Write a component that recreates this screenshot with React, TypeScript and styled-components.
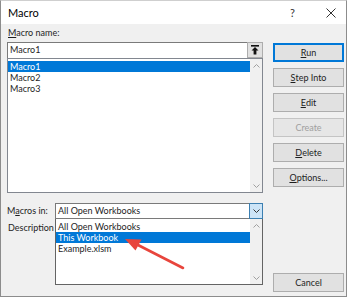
import React from 'react';
import styled, { createGlobalStyle } from 'styled-components';

const GlobalStyle = createGlobalStyle`
  html, body {
    margin: 0;
    padding: 0;
    background: #ffffff;
  }
  body {
    font-family: Lato, "Noto Sans", "Liberation Sans", sans-serif;
    font-size: 9px;
    color: #1e1e1e;
  }
  * {
    box-sizing: border-box;
  }
`;

const colors = {
  face: '#f0f0f0',
  button: '#e1e1e1',
  buttonBorder: '#adadad',
  select: '#0078d7',
  field: '#7a7a7a',
  text: '#1e1e1e',
  disabled: '#a0a0a0',
  arrow: '#e8453c',
};

const macros = ['Macro1', 'Macro2', 'Macro3'];
const locations = ['All Open Workbooks', 'This Workbook', 'Example.xlsm'];

const buttons = [
  { key: 'R', rest: 'un', primary: true },
  { key: 'S', rest: 'tep Into' },
  { key: 'E', rest: 'dit' },
  { key: '', rest: 'Create', disabled: true },
  { key: 'D', rest: 'elete' },
  { key: 'O', rest: 'ptions...' },
];

function CloseIcon() {
  return (
    <svg width="10" height="10" viewBox="0 0 10 10">
      <path d="M0.5 0.5 L9.5 9.5 M9.5 0.5 L0.5 9.5" stroke="#333" strokeWidth="1" fill="none" />
    </svg>
  );
}

function PickIcon() {
  return (
    <svg width="8" height="10" viewBox="0 0 8 10">
      <rect x="0" y="0" width="8" height="1.6" fill="#111" />
      <path d="M4 2 L7.5 5.6 L5.4 5.6 L5.4 9.5 L2.6 9.5 L2.6 5.6 L0.5 5.6 Z" fill="#111" />
    </svg>
  );
}

function Chevron({ up, color = '#a0a0a0' }: { up?: boolean; color?: string }) {
  return (
    <svg width="7" height="4" viewBox="0 0 7 4">
      <path
        d={up ? 'M0.5 3.5 L3.5 0.5 L6.5 3.5' : 'M0.5 0.5 L3.5 3.5 L6.5 0.5'}
        stroke={color}
        strokeWidth="1"
        fill="none"
      />
    </svg>
  );
}

export default function App() {
  return (
    <>
      <GlobalStyle />
      <Window>
        <TitleBar>
          <Title>Macro</Title>
          <TitleButtons>
            <Help>?</Help>
            <CloseIcon />
          </TitleButtons>
        </TitleBar>
        <Body>
          <LeftColumn>
            <FieldLabel>
              <u>M</u>acro name:
            </FieldLabel>
            <NameInput>
              <NameText>Macro1</NameText>
              <PickButton>
                <PickIcon />
              </PickButton>
            </NameInput>
            <ListBox>
              <ListItems>
                {macros.map((m, i) => (
                  <Row key={m} $selected={i === 0}>
                    {m}
                  </Row>
                ))}
              </ListItems>
              <ScrollBar>
                <Chevron up />
                <Chevron />
              </ScrollBar>
            </ListBox>
            <MacrosInRow>
              <InlineLabel>
                M<u>a</u>cros in:
              </InlineLabel>
              <ComboWrap>
                <Combo>
                  <ComboText>All Open Workbooks</ComboText>
                  <ComboButton>
                    <Chevron color="#333" />
                  </ComboButton>
                </Combo>
                <DropList>
                  <ListItems>
                    {locations.map((l, i) => (
                      <Row key={l} $selected={i === 1}>
                        {l}
                      </Row>
                    ))}
                  </ListItems>
                  <ScrollBar>
                    <Chevron up />
                    <Chevron />
                  </ScrollBar>
                </DropList>
              </ComboWrap>
            </MacrosInRow>
            <FieldLabel>Description</FieldLabel>
          </LeftColumn>
          <ButtonColumn>
            {buttons.map((b) => (
              <DialogButton key={b.rest} $primary={b.primary} $disabled={b.disabled}>
                {b.key && <u>{b.key}</u>}
                {b.rest}
              </DialogButton>
            ))}
            <CancelButton>Cancel</CancelButton>
          </ButtonColumn>
        </Body>
        <Pointer width="70" height="40" viewBox="0 0 70 40">
          <path d="M61 31 L16 8" stroke={colors.arrow} strokeWidth="2.6" strokeLinecap="round" fill="none" />
          <path d="M3 2 L19.5 2.5 L13.5 13.5 Z" fill={colors.arrow} />
        </Pointer>
      </Window>
    </>
  );
}

const Window = styled.div`
  position: relative;
  width: 347px;
  height: 297px;
  background: ${colors.face};
  border: 1px solid #8c8c8c;
  border-top-color: #cfcfcf;
  display: flex;
  flex-direction: column;
`;

const TitleBar = styled.div`
  height: 23px;
  background: #ffffff;
  display: flex;
  align-items: center;
  justify-content: space-between;
  padding: 0 10px 0 7px;
`;

const Title = styled.div`
  font-size: 11px;
  color: #000;
`;

const TitleButtons = styled.div`
  display: flex;
  align-items: center;
  gap: 31px;
`;

const Help = styled.span`
  font-size: 11px;
  color: #333;
`;

const Body = styled.div`
  flex: 1;
  display: grid;
  grid-template-columns: 256px 71px;
  column-gap: 10px;
  padding: 0 1px 4px 6px;
`;

const LeftColumn = styled.div`
  display: flex;
  flex-direction: column;
`;

const FieldLabel = styled.div`
  height: 18px;
  line-height: 18px;
  padding-left: 1px;
`;

const NameInput = styled.div`
  height: 16px;
  display: flex;
  background: #fff;
  border: 1px solid ${colors.field};
  border-bottom: none;
`;

const NameText = styled.div`
  flex: 1;
  line-height: 14px;
  padding-left: 2px;
`;

const PickButton = styled.div`
  width: 16px;
  margin: -1px -1px 0 0;
  border: 1px solid ${colors.buttonBorder};
  background: ${colors.button};
  display: flex;
  align-items: center;
  justify-content: center;
`;

const ListBox = styled.div`
  height: 135px;
  display: flex;
  background: #fff;
  border: 1px solid #828790;
`;

const ListItems = styled.div`
  flex: 1;
  padding: 2px 0 0 0;
`;

const Row = styled.div<{ $selected?: boolean }>`
  height: 11px;
  line-height: 11px;
  padding-left: 2px;
  white-space: nowrap;
  background: ${(p) => (p.$selected ? colors.select : 'transparent')};
  color: ${(p) => (p.$selected ? '#fff' : colors.text)};
`;

const ScrollBar = styled.div`
  width: 12px;
  background: ${colors.face};
  display: flex;
  flex-direction: column;
  align-items: center;
  justify-content: space-between;
  padding: 5px 0 4px;
`;

const MacrosInRow = styled.div`
  margin-top: 10px;
  height: 16px;
  display: flex;
`;

const InlineLabel = styled.div`
  width: 48px;
  line-height: 16px;
`;

const ComboWrap = styled.div`
  position: relative;
  flex: 1;
`;

const Combo = styled.div`
  height: 16px;
  display: flex;
  background: #fff;
  border: 1px solid ${colors.field};
  border-right: none;
`;

const ComboText = styled.div`
  flex: 1;
  line-height: 14px;
  padding-left: 2px;
`;

const ComboButton = styled.div`
  width: 14px;
  margin: -1px 0;
  background: #cce4f7;
  border: 1px solid #3c7fb1;
  display: flex;
  align-items: center;
  justify-content: center;
`;

const DropList = styled.div`
  position: absolute;
  top: 100%;
  left: 0;
  right: 0;
  height: 66px;
  display: flex;
  background: #fff;
  border: 1px solid #646464;
  border-top: none;
`;

const ButtonColumn = styled.div`
  display: flex;
  flex-direction: column;
  gap: 6px;
  padding-top: 19px;
`;

const DialogButton = styled.div<{ $primary?: boolean; $disabled?: boolean }>`
  height: 19px;
  display: flex;
  align-items: center;
  justify-content: center;
  border: 1px solid;
  box-shadow: ${(p) => (p.$primary ? `inset 0 0 0 1px ${colors.select}` : 'none')};
  color: ${(p) => (p.$disabled ? colors.disabled : colors.text)};
  background: ${(p) => (p.$disabled ? '#e6e6e6' : colors.button)};
  border-color: ${(p) => (p.$disabled ? '#c4c4c4' : p.$primary ? colors.select : colors.buttonBorder)};
`;

const CancelButton = styled(DialogButton)`
  margin-top: auto;
`;

const Pointer = styled.svg`
  position: absolute;
  left: 121px;
  top: 236px;
`;
